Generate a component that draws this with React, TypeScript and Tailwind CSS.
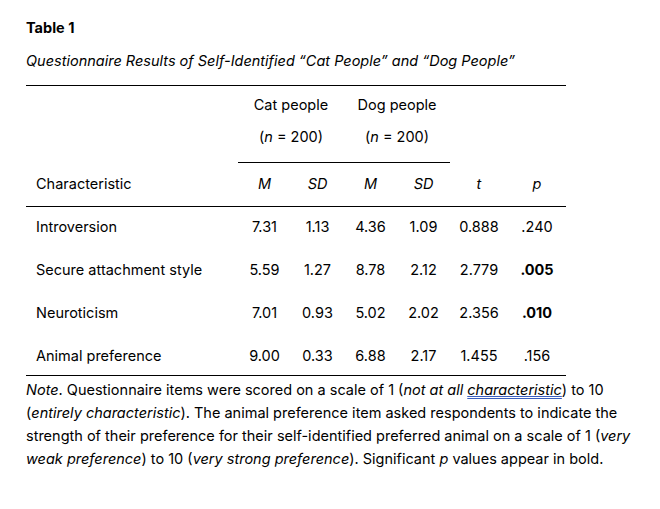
import React from "react";

const rows = [
  { c: "Introversion", v: ["7.31", "1.13", "4.36", "1.09", "0.888"], p: ".240", b: false },
  { c: "Secure attachment style", v: ["5.59", "1.27", "8.78", "2.12", "2.779"], p: ".005", b: true },
  { c: "Neuroticism", v: ["7.01", "0.93", "5.02", "2.02", "2.356"], p: ".010", b: true },
  { c: "Animal preference", v: ["9.00", "0.33", "6.88", "2.17", "1.455"], p: ".156", b: false },
];

const rowCls = ["h-[41px]", "h-[43px]", "h-[43px]", "h-[42px] border-b-[1.5px] border-black"];
const cellPad = ["pb-[1px]", "", "", "pt-[3px]"];

export default function App() {
  return (
    <div className="w-[660px] h-[509px] bg-white text-black text-[14.5px] leading-[23px]" style={{ fontFamily: "Inter, sans-serif" }}>
      <div className="pl-[26px] pt-[16px]">
        <div className="font-bold">Table 1</div>
        <div className="italic mt-[10px]">Questionnaire Results of Self-Identified “Cat People” and “Dog People”</div>
        <table className="mt-[13px] w-[540px] border-collapse table-fixed">
          <colgroup>
            <col className="w-[212px]" />
            <col className="w-[53px]" />
            <col className="w-[53px]" />
            <col className="w-[53px]" />
            <col className="w-[53px]" />
            <col className="w-[58px]" />
            <col className="w-[58px]" />
          </colgroup>
          <thead>
            <tr className="border-t-[1.5px] border-black">
              <th></th>
              <th colSpan={2} className="font-normal text-center pt-[2px] h-[36px]">Cat people</th>
              <th colSpan={2} className="font-normal text-center pt-[2px]">Dog people</th>
              <th></th>
              <th></th>
            </tr>
            <tr>
              <th></th>
              <th colSpan={2} className="font-normal text-center border-b-[1.5px] border-black h-[41px] align-top pt-[3px]">
                (<i>n</i> = 200)
              </th>
              <th colSpan={2} className="font-normal text-center border-b-[1.5px] border-black align-top pt-[3px]">
                (<i>n</i> = 200)
              </th>
              <th></th>
              <th></th>
            </tr>
            <tr className="border-b-[1.5px] border-black h-[44px]">
              <th className="font-normal text-left pl-[10px] pb-[2px]">Characteristic</th>
              <th className="font-normal italic pb-[2px]">M</th>
              <th className="font-normal italic pb-[2px]">SD</th>
              <th className="font-normal italic pb-[2px]">M</th>
              <th className="font-normal italic pb-[2px]">SD</th>
              <th className="font-normal italic pb-[2px]">t</th>
              <th className="font-normal italic pb-[2px]">p</th>
            </tr>
          </thead>
          <tbody>
            {rows.map((r, i) => (
              <tr key={r.c} className={rowCls[i]}>
                <td className={"pl-[10px] " + cellPad[i]}>{r.c}</td>
                {r.v.map((x, j) => (
                  <td key={j} className={"text-center " + cellPad[i]}>{x}</td>
                ))}
                <td className={(r.b ? "text-center font-bold " : "text-center ") + cellPad[i]}>{r.p}</td>
              </tr>
            ))}
          </tbody>
        </table>
        <div className="w-[630px] mt-[2px] whitespace-nowrap">
          <div>
            <i>Note</i>. Questionnaire items were scored on a scale of 1 (<i>not at all <span className="underline decoration-double decoration-[#3b5fc0]">characteristic</span></i>) to 10
          </div>
          <div>
            (<i>entirely characteristic</i>). The animal preference item asked respondents to indicate the
          </div>
          <div>
            strength of their preference for their self-identified preferred animal on a scale of 1 (<i>very</i>
          </div>
          <div>
            <i>weak preference</i>) to 10 (<i>very strong preference</i>). Significant <i>p</i> values appear in bold.
          </div>
        </div>
      </div>
    </div>
  );
}
